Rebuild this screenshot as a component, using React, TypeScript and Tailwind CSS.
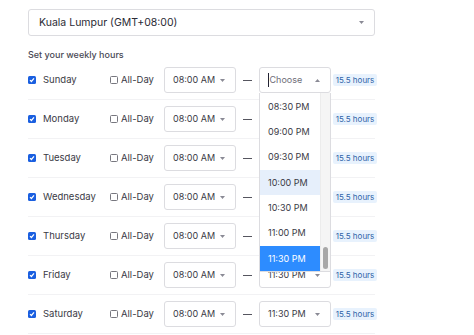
const days = ["Sunday", "Monday", "Tuesday", "Wednesday", "Thursday", "Friday", "Saturday"];
const options = ["08:30 PM", "09:00 PM", "09:30 PM", "10:00 PM", "10:30 PM", "11:00 PM", "11:30 PM"];

function Caret({ up }: { up?: boolean }) {
  return (
    <svg width="5" height="3" viewBox="0 0 5 3" className="shrink-0">
      <path d={up ? "M0 3 L2.5 0 L5 3 Z" : "M0 0 L5 0 L2.5 3 Z"} fill="#8a8a95" />
    </svg>
  );
}

function CheckBox({ checked }: { checked: boolean }) {
  if (checked) {
    return (
      <span className="flex h-[8px] w-[8px] shrink-0 items-center justify-center rounded-[1.5px] bg-[#1a5fe0]">
        <svg width="6" height="6" viewBox="0 0 6 6">
          <path d="M1 3.1 L2.4 4.5 L5 1.4" fill="none" stroke="#fff" strokeWidth="1.2" />
        </svg>
      </span>
    );
  }
  return <span className="h-[8px] w-[8px] shrink-0 rounded-[1.5px] border border-[#77777f] bg-white" />;
}

function TimeSelect({ value, up, cursor }: { value: string; up?: boolean; cursor?: boolean }) {
  return (
    <div className="flex h-[26px] w-[72px] shrink-0 items-center justify-between whitespace-nowrap rounded-[3px] border border-[#dcdce0] bg-white pl-[8px] pr-[10px] text-[9px]">
      <span className={cursor ? "border-l border-[#232333] pl-[0.5px] text-[#6e6e78]" : "text-[#3a3a45]"}>{value}</span>
      <Caret up={up} />
    </div>
  );
}

function Dropdown() {
  return (
    <div className="absolute left-0 top-[26px] z-10 flex h-[179px] w-[72px] border border-t-0 border-[#dcdce0] bg-white text-[9px]">
      <div className="flex flex-1 flex-col pt-[1px]">
        {options.map((o, i) => (
          <div
            key={o}
            className={
              "flex h-[25.5px] items-center whitespace-nowrap pl-[8px] " +
              (i === 3 ? "bg-[#e6effb] text-[#3a3a45]" : i === 6 ? "bg-[#2d8cff] text-white" : "text-[#3a3a45]")
            }
          >
            {o}
          </div>
        ))}
      </div>
      <div className="relative w-[10px] border-l border-[#ececec] bg-[#f5f5f5]">
        <div className="absolute left-[2px] top-[154px] h-[22px] w-[5px] rounded-full bg-[#a8a8a8]" />
      </div>
    </div>
  );
}

export default function App() {
  return (
    <div className="min-h-[335px] w-[474px] bg-white pl-[28px] pt-[9px] text-[9.5px] text-[#232333]" style={{ fontFamily: "Inter, 'Noto Sans', sans-serif" }}>
      <div className="w-[347px]">
        <div className="flex h-[27px] items-center justify-between rounded-[3px] border border-[#dcdce0] pl-[10px] pr-[10px] text-[10.5px]">
          <span className="text-[#2b2b35]">Kuala Lumpur (GMT+08:00)</span>
          <Caret />
        </div>
        <div className="mt-[13px] flex h-[12px] items-center text-[9px] font-medium text-[#4a4a55]">Set your weekly hours</div>
        <div className="flex flex-col">
          {days.map((d, i) => (
            <div key={d} className="flex h-[39px] items-center whitespace-nowrap border-b border-[#f2f2f4]">
              <CheckBox checked />
              <span className="ml-[7px] w-[67px] shrink-0 text-[#3a3a45]">{d}</span>
              <CheckBox checked={false} />
              <span className="ml-[3px] w-[43px] shrink-0 text-[#3a3a45]">All-Day</span>
              <TimeSelect value="08:00 AM" />
              <span className="mx-[7px] h-[1px] w-[9px] shrink-0 bg-[#55555f]" />
              <div className="relative shrink-0">
                {i === 0 ? (
                  <TimeSelect value="Choose" up cursor />
                ) : i < 5 ? (
                  <div className="h-[26px] w-[72px]" />
                ) : (
                  <TimeSelect value="11:30 PM" />
                )}
                {i === 0 && <Dropdown />}
              </div>
              <span className="ml-[2px] flex h-[12px] w-[44px] shrink-0 items-center justify-center rounded-[2px] bg-[#e8f2fd] text-[8px] text-[#2f63a8]">
                15.5 hours
              </span>
            </div>
          ))}
        </div>
      </div>
    </div>
  );
}
